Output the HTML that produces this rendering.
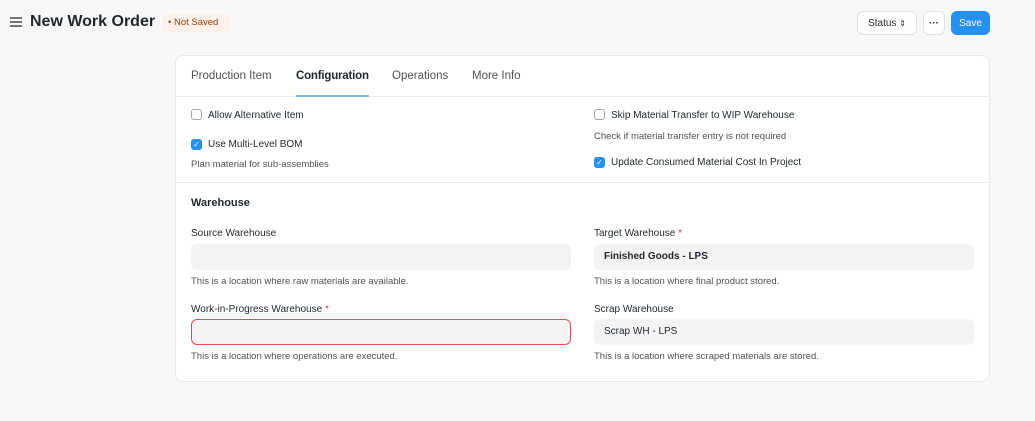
<!DOCTYPE html>
<html><head><style>
*{box-sizing:border-box;margin:0;padding:0}
body{width:1035px;height:421px;background:#f8f8f8;font-family:"Liberation Sans",sans-serif;color:#1f272e;position:relative;overflow:hidden}
.a{position:absolute}
.t{font-size:10px;color:#1f272e}
.s{font-size:9.5px;color:#525252}
.cb{width:11px;height:11px;border:1px solid #a0a6ab;border-radius:3px;background:#fff}
.cbc{width:11px;height:11px;border-radius:3px;background:#2490ef;color:#fff;font-size:8px;line-height:11px;text-align:center}
.inp{height:26px;background:#f3f3f3;border-radius:6px;font-size:10px;font-weight:bold;padding:0 10px;line-height:26px;color:#1f272e}
.btn{display:flex;align-items:center;justify-content:center}
</style></head><body>
<div class="a" style="left:10px;top:17px;width:12px">
<div style="height:1.5px;background:#777;margin-bottom:2.5px"></div><div style="height:1.5px;background:#777;margin-bottom:2.5px"></div><div style="height:1.5px;background:#777"></div></div>
<div class="a" style="left:30px;top:13px;font-size:16px;font-weight:bold">New Work Order</div>
<div class="a" style="left:162px;top:14px;width:68px;height:18px;background:#fff1ea;border-radius:5px;font-size:9.5px;color:#91400d;line-height:18px;padding-left:6px">• Not Saved</div>
<div class="a btn" style="left:857px;top:11px;width:60px;height:24px;background:#fff;border:1px solid #e2e2e2;border-radius:6px;font-size:10px">Status&nbsp;<span style="font-size:8px">⇕</span></div>
<div class="a btn" style="left:923px;top:11px;width:22px;height:24px;background:#fff;border:1px solid #e2e2e2;border-radius:6px;font-size:10px;font-weight:bold">···</div>
<div class="a btn" style="left:951px;top:11px;width:39px;height:24px;background:#2490ef;border-radius:6px;font-size:10px;color:#fff">Save</div>
<div class="a" style="left:175px;top:55px;width:815px;height:327px;background:#fff;border:1px solid #e8e8e8;border-radius:8px"></div>
<div class="a" style="left:175px;top:96px;width:815px;height:1px;background:#ececec"></div>
<div class="a" style="left:175px;top:182px;width:815px;height:1px;background:#ececec"></div>
<div class="a" style="left:191px;top:70px;font-size:11.5px;color:#525252">Production Item</div>
<div class="a" style="left:296px;top:70px;font-size:11.5px;font-weight:bold;letter-spacing:-0.2px">Configuration</div>
<div class="a" style="left:296px;top:95px;width:73px;height:2px;background:#7fb9f2"></div>
<div class="a" style="left:392px;top:70px;font-size:11.5px;color:#525252">Operations</div>
<div class="a" style="left:472px;top:70px;font-size:11.5px;color:#525252">More Info</div>
<div class="a cb" style="left:191px;top:109px"></div><div class="a t" style="left:208px;top:110px">Allow Alternative Item</div>
<div class="a cbc" style="left:191px;top:139px">✓</div><div class="a t" style="left:208px;top:139px">Use Multi-Level BOM</div>
<div class="a s" style="left:191px;top:159px">Plan material for sub-assemblies</div>
<div class="a cb" style="left:594px;top:109px"></div><div class="a t" style="left:611px;top:110px">Skip Material Transfer to WIP Warehouse</div>
<div class="a s" style="left:594px;top:131px">Check if material transfer entry is not required</div>
<div class="a cbc" style="left:594px;top:157px">✓</div><div class="a t" style="left:611px;top:157px">Update Consumed Material Cost In Project</div>
<div class="a" style="left:191px;top:197px;font-size:11px;font-weight:bold">Warehouse</div>
<div class="a t" style="left:191px;top:228px">Source Warehouse</div>
<div class="a inp" style="left:191px;top:244px;width:380px"></div>
<div class="a s" style="left:191px;top:276px">This is a location where raw materials are available.</div>
<div class="a t" style="left:191px;top:304px">Work-in-Progress Warehouse <span style="color:#e03636">*</span></div>
<div class="a inp" style="left:191px;top:319px;width:380px;border:1px solid #e24c4c"></div>
<div class="a s" style="left:191px;top:351px">This is a location where operations are executed.</div>
<div class="a t" style="left:594px;top:228px">Target Warehouse <span style="color:#e03636">*</span></div>
<div class="a inp" style="left:594px;top:244px;width:380px">Finished Goods - LPS</div>
<div class="a s" style="left:594px;top:276px">This is a location where final product stored.</div>
<div class="a t" style="left:594px;top:304px">Scrap Warehouse</div>
<div class="a inp" style="left:594px;top:319px;width:380px;font-weight:normal">Scrap WH - LPS</div>
<div class="a s" style="left:594px;top:351px">This is a location where scraped materials are stored.</div>
</body></html>
